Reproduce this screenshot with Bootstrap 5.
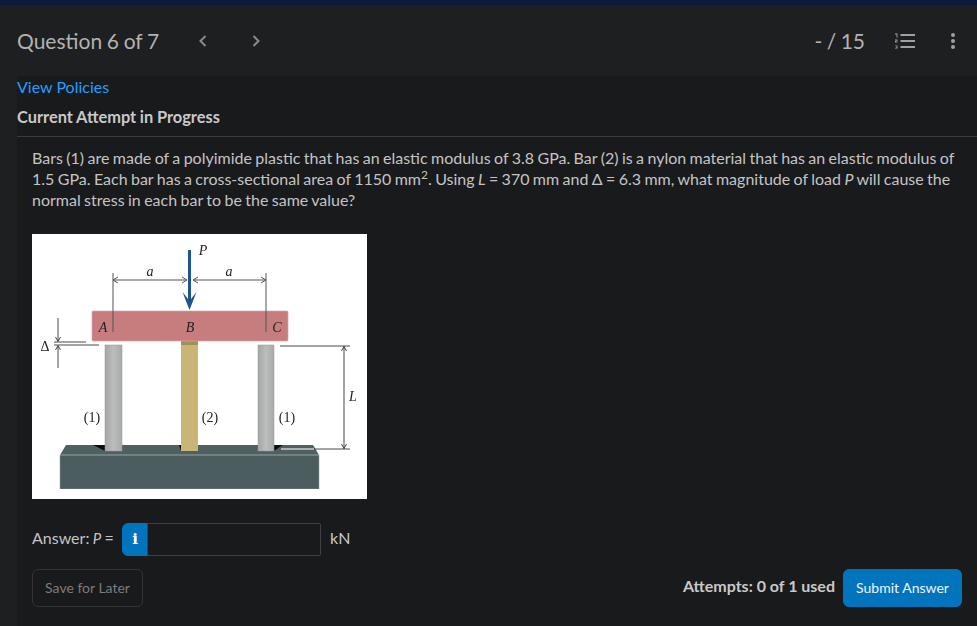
<!DOCTYPE html>
<html lang="en" data-bs-theme="dark">
  <head>
    <meta charset="UTF-8" />
    <meta name="viewport" content="width=device-width, initial-scale=1.0" />
    <title>Question 6 of 7</title>
    <link
      href="https://cdn.jsdelivr.net/npm/bootstrap@5.3.5/dist/css/bootstrap.min.css"
      rel="stylesheet"
    />
    <style>
      html,
      body {
        height: 626px;
        overflow: hidden;
      }

      body {
        background: #1e1f20;
        color: #c9c9c9;
        font-family: Lato, "Liberation Sans", sans-serif;
        font-size: 16px;
      }

      .top-strip {
        height: 5px;
        background: #0d1a3b;
      }

      .quiz-header {
        height: 71px;
        padding: 0 16px 0 17px;
      }

      .quiz-title {
        font-size: 21px;
        font-weight: 400;
        line-height: 1;
        margin: 0;
        width: 182px;
        color: #b2b2b2;
        word-spacing: -0.7px;
      }

      .nav-arrow {
        display: block;
        width: 8px;
        height: 12px;
      }

      .nav-next {
        margin-left: 45px;
      }

      .score-text {
        font-size: 21px;
        margin-right: 30px;
        line-height: 1;
        color: #b2b2b2;
        word-spacing: -1px;
      }

      .list-icon {
        width: 20px;
        height: 16px;
        margin-right: 35px;
      }

      .kebab-icon {
        width: 6px;
        height: 16px;
        margin-right: 5px;
      }

      .quiz-body {
        margin-left: 17px;
        height: 550px;
        background: #191a1c;
      }

      .policy-link {
        display: block;
        color: #1f9fff;
        text-decoration: none;
        line-height: 22px;
      }

      .attempt-title {
        font-size: 16.4px;
        font-weight: 700;
        line-height: 20px;
        margin: 9px 0 9px;
        color: #c9c9c9;
        word-spacing: -0.3px;
      }

      .title-rule {
        margin: 0;
        border-top: 1px solid #3a3b3d;
        opacity: 1;
      }

      .question-area {
        padding: 10px 15px 0;
      }

      .question-text {
        line-height: 21px;
        margin: 0 0 24px;
        color: #c4c4c4;
        word-spacing: -0.7px;
      }

      .question-text sup {
        font-size: 12px;
      }

      .figure-box {
        display: block;
        width: 335px;
        height: 265px;
        background: #fff;
        margin-bottom: 24px;
      }

      .figure-box text {
        font-family: "Liberation Serif", serif;
        font-size: 14px;
        fill: #222;
        text-anchor: middle;
      }

      .figure-box .var-label {
        font-style: italic;
      }

      .answer-label {
        width: 90px;
        color: #c4c4c4;
        margin-top: -4px;
        word-spacing: -0.8px;
      }

      .answer-label i {
        font-size: 15px;
      }

      .answer-group {
        width: 199px;
        height: 33px;
      }

      .info-addon {
        width: 26px;
        justify-content: center;
        padding: 0;
        background: #0274be;
        border-color: #0274be;
        color: #fff;
        font-family: "DejaVu Serif", serif;
        font-weight: 700;
        font-size: 15px;
      }

      .answer-input {
        height: 33px;
        min-height: 33px;
        background: #191a1c;
        border-color: #3f4042;
        border-radius: 0 2px 2px 0;
      }

      .unit-text {
        margin-left: 9px;
        margin-top: -4px;
      }

      .action-row {
        margin-top: 13px;
        width: 930px;
      }

      .save-btn {
        width: 111px;
        height: 38px;
        padding: 0 0 2px;
        font-size: 14px;
        color: #7c7c7c;
        background: transparent;
        border: 1px solid #333436;
      }

      .attempts-text {
        font-weight: 700;
        line-height: 1;
        margin-top: -5px;
      }

      .submit-btn {
        width: 119px;
        height: 38px;
        padding: 0 0 2px;
        font-size: 14px;
        background: #0274be;
        border-color: #0274be;
        color: #eef5fa;
      }
    </style>
  </head>

  <body>
    <div class="top-strip"></div>

    <header class="quiz-header d-flex align-items-center">
      <h1 class="quiz-title">Question 6 of 7</h1>
      <svg class="nav-arrow" viewBox="0 0 8 12" fill="none" stroke="#8a8a8a" stroke-width="2">
        <path d="M6.500 1 1.500 6l5 5" />
      </svg>
      <svg class="nav-arrow nav-next" viewBox="0 0 8 12" fill="none" stroke="#8a8a8a" stroke-width="2">
        <path d="M1.500 1l5 5-5 5" />
      </svg>
      <span class="score-text ms-auto">- / 15</span>
      <svg class="list-icon" viewBox="0 0 20 16" fill="#a0a0a0">
        <rect x="5.500" y="1" width="14.500" height="2" />
        <rect x="5.500" y="7" width="14.500" height="2" />
        <rect x="5.500" y="13" width="14.500" height="2" />
        <path d="M0 .5h2.500v4H1.500V1.500H0zM0 6.500h2.500v2H1v.5h1.500v.5H0v-2h1.500V7H0zM0 12.500h2.500v3H0V15h1.500v-.6H.5v-.5h1V13H0z" />
      </svg>
      <svg class="kebab-icon" viewBox="0 0 6 16" fill="#a0a0a0">
        <circle cx="3" cy="2" r="2" />
        <circle cx="3" cy="8" r="2" />
        <circle cx="3" cy="14" r="2" />
      </svg>
    </header>

    <main class="quiz-body">
      <a class="policy-link" href="#">View Policies</a>
      <h2 class="attempt-title">Current Attempt in Progress</h2>
      <hr class="title-rule" />

      <div class="question-area">
        <p class="question-text">
          Bars (1) are made of a polyimide plastic that has an elastic modulus of 3.8 GPa. Bar (2) is a nylon material that has an elastic modulus of 1.5 GPa. Each bar has a cross-sectional area of 1150 mm<sup>2</sup>. Using <i>L</i> = 370 mm and Δ = 6.3 mm, what magnitude of load <i>P</i> will cause the normal stress in each bar to be the same value?
        </p>

        <svg class="figure-box" viewBox="0 0 335 265">
          <defs>
            <linearGradient id="barGrey" x1="0" x2="1" y1="0" y2="0">
              <stop offset="0" stop-color="#a4a6a6" />
              <stop offset="0.5" stop-color="#bcbebe" />
              <stop offset="1" stop-color="#a8aaaa" />
            </linearGradient>
            <filter id="softEdge" x="0" y="0" width="100%" height="100%">
              <feGaussianBlur stdDeviation="0.35" />
            </filter>
          </defs>

          <g filter="url(#softEdge)">
            <!-- base -->
            <path d="M34 211H281L287 221H28Z" fill="#4f6163" />
            <path d="M61 211H73V217ZM242 211H251L242 217ZM147 211H149V217Z" fill="#111" />
            <rect x="28" y="221" width="259" height="34" fill="#4c5d5f" stroke="#8f9a9b" stroke-width="0.5" />
            <path d="M28 221H287" stroke="#99a5a5" stroke-width="0.7" />

            <!-- bars -->
            <rect x="73" y="111" width="17" height="106" fill="url(#barGrey)" stroke="#999" stroke-width="0.5" />
            <rect x="149" y="107" width="17" height="110" fill="#c9b574" />
            <rect x="149" y="107" width="17" height="4" fill="#a0905a" />
            <rect x="226" y="111" width="16" height="106" fill="url(#barGrey)" stroke="#999" stroke-width="0.5" />

            <!-- beam -->
            <rect x="60" y="77" width="196" height="30" rx="1" fill="#c77c7e" stroke="#d9a7a8" stroke-width="0.7" />

            <!-- dimension lines -->
            <g fill="none" stroke="#555" stroke-width="1">
              <path d="M81 39V98M234 39V98" />
              <path d="M81 46H155M161 46H234" />
              <path d="M86 43 81 46l5 3M150 43l5 3-5 3M166 43l-5 3 5 3M229 43l5 3-5 3" />
            </g>
            <g fill="none" stroke="#333" stroke-width="0.9">
              <path d="M26 84V107M26 112V134M22 108H54M22 111H67" />
              <path d="M23.500 103 26 107.500 28.500 103M23.500 116 26 111.500 28.500 116" />
              <path d="M248 112H318M282 215H318M312 112V215" />
              <path d="M309.500 117 312 112.500 314.500 117M309.500 210 312 214.500 314.500 210" />
            </g>
            <path d="M249 215H282" stroke="#c8cdcd" stroke-width="1.500" />

            <!-- load arrow -->
            <path d="M157.500 16V72" stroke="#1a5590" stroke-width="3" fill="none" />
            <path d="M150.500 58 157.500 76 164.500 58 157.500 67Z" fill="#1a5590" />

            <!-- labels -->
            <text class="var-label" x="171" y="21">P</text>
            <text class="var-label" x="118" y="42">a</text>
            <text class="var-label" x="197" y="42">a</text>
            <text class="var-label" x="71" y="98">A</text>
            <text class="var-label" x="158" y="98">B</text>
            <text class="var-label" x="245" y="98">C</text>
            <text x="13" y="117">Δ</text>
            <text class="var-label" x="321" y="167">L</text>
            <text x="60" y="188">(1)</text>
            <text x="178" y="188">(2)</text>
            <text x="255" y="188">(1)</text>
          </g>
        </svg>

        <div class="d-flex align-items-center">
          <span class="answer-label">Answer: <i>P</i> =</span>
          <div class="input-group answer-group flex-nowrap">
            <span class="input-group-text info-addon">i</span>
            <input class="form-control answer-input" type="text" aria-label="P" />
          </div>
          <span class="unit-text">kN</span>
        </div>

        <div class="action-row d-flex align-items-center">
          <button class="btn save-btn" type="button">Save for Later</button>
          <span class="attempts-text ms-auto me-2">Attempts: 0 of 1 used</span>
          <button class="btn submit-btn" type="button">Submit Answer</button>
        </div>
      </div>
    </main>

    <script src="https://cdn.jsdelivr.net/npm/bootstrap@5.3.5/dist/js/bootstrap.bundle.min.js"></script>
  </body>
</html>
